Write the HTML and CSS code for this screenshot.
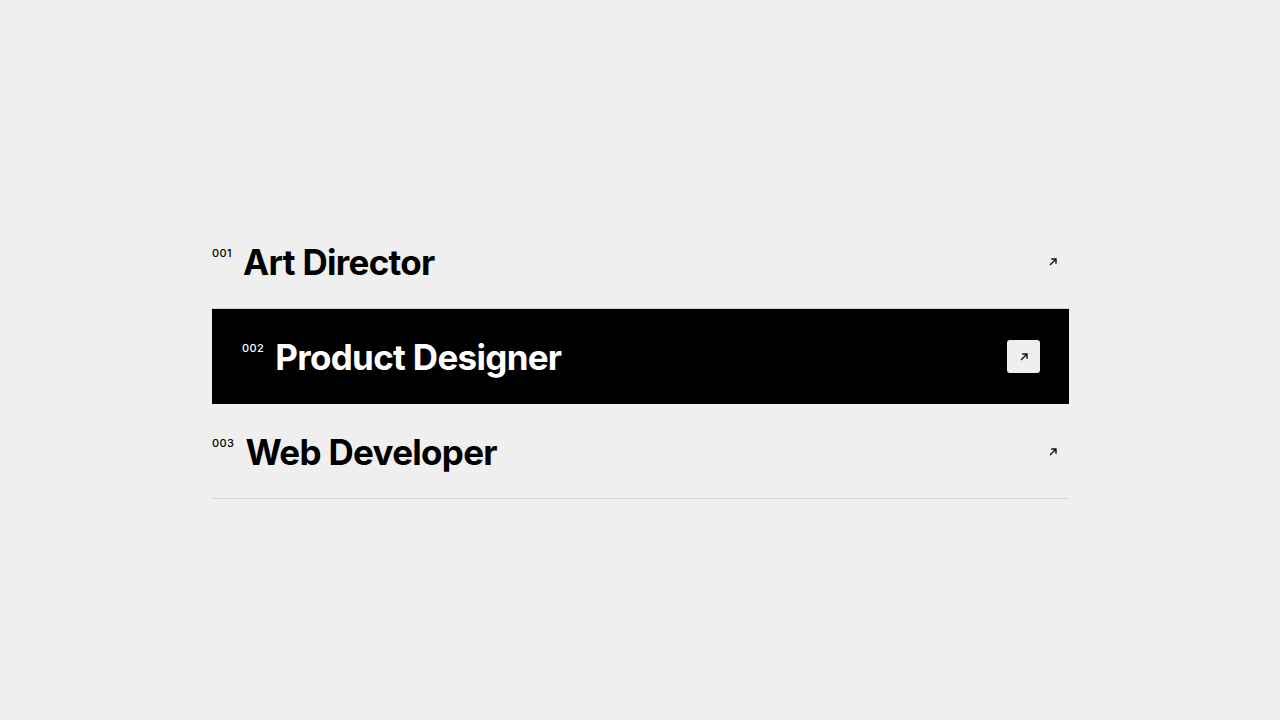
FILE: index.html
```html
<!DOCTYPE html>
<html lang="en">
<head>
<meta charset="utf-8">
<title>Roles</title>
<link rel="stylesheet" href="styles.css">
</head>
<body>
<main class="page">
  <ul class="roles">
    <li class="role">
      <div class="role-main">
        <span class="role-num">001</span>
        <span class="role-title">Art Director</span>
      </div>
      <span class="role-icon"><svg viewBox="0 0 10 10" width="10" height="10"><path d="M2 8 L8 2 M3.2 2 H8 V6.8" fill="none" stroke="currentColor" stroke-width="1.4"/></svg></span>
    </li>
    <li class="role role-active">
      <div class="role-main">
        <span class="role-num">002</span>
        <span class="role-title">Product Designer</span>
      </div>
      <span class="role-icon"><svg viewBox="0 0 10 10" width="10" height="10"><path d="M2 8 L8 2 M3.2 2 H8 V6.8" fill="none" stroke="currentColor" stroke-width="1.4"/></svg></span>
    </li>
    <li class="role">
      <div class="role-main">
        <span class="role-num">003</span>
        <span class="role-title">Web Developer</span>
      </div>
      <span class="role-icon"><svg viewBox="0 0 10 10" width="10" height="10"><path d="M2 8 L8 2 M3.2 2 H8 V6.8" fill="none" stroke="currentColor" stroke-width="1.4"/></svg></span>
    </li>
  </ul>
</main>
</body>
</html>
```

FILE: styles.css
```css
* { box-sizing: border-box; }
html, body {
  margin: 0;
  padding: 0;
  background: #efefef;
  font-family: Inter, "Liberation Sans", sans-serif;
  color: #000;
}
.page {
  width: 1280px;
  height: 720px;
  padding: 214px 0 0 212px;
}
.roles {
  list-style: none;
  margin: 0;
  padding: 0;
  width: 857px;
}
.role {
  display: flex;
  align-items: center;
  justify-content: space-between;
  height: 95px;
  padding-top: 1px;
  border-bottom: 1px solid #d4d4d4;
}
.role-main {
  display: flex;
  align-items: flex-start;
  gap: 11px;
}
.role-num {
  font-size: 11px;
  line-height: 11px;
  font-weight: 500;
  letter-spacing: 0.04em;
  margin-top: 6px;
}
.role-title {
  font-size: 35px;
  line-height: 40px;
  font-weight: 700;
  letter-spacing: -0.02em;
}
.role-icon {
  width: 33px;
  height: 33px;
  border-radius: 3px;
  display: flex;
  align-items: center;
  justify-content: center;
  color: #111;
}
.role-active {
  background: #000;
  color: #fff;
  padding: 1px 29px 0 30px;
  border-bottom-color: #000;
}
.role-active .role-icon {
  background: #efefef;
  color: #111;
}
```
